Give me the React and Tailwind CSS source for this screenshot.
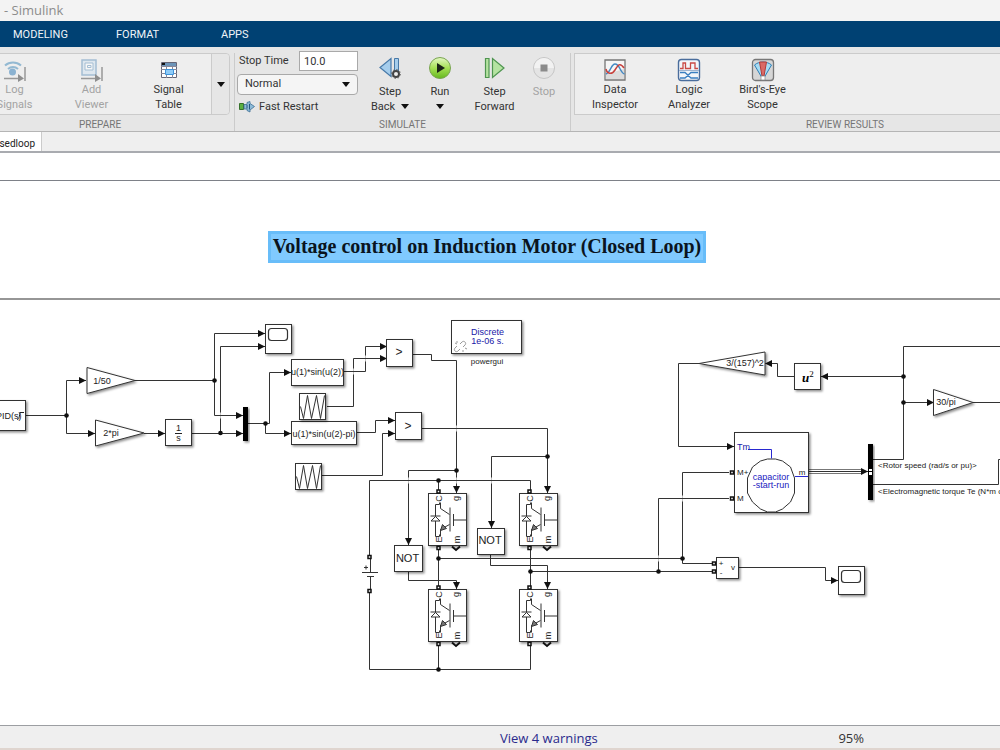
import React from 'react';
import clsx from 'clsx';

const Caret = ({ className }) => (
  <svg viewBox="0 0 8 5" className={clsx('h-[5px] w-2', className)} fill="#111">
    <path d="M0 0h8L4 5z" />
  </svg>
);

/* ---------- toolstrip icons ---------- */

const LogIcon = () => (
  <svg viewBox="0 0 24 24" className="size-6 opacity-50" fill="none">
    <path d="M2 7.500A12 12 0 0 1 18 7.500M5 11A7.500 7.500 0 0 1 15 11" stroke="#3b86b8" strokeWidth="2" />
    <circle cx="9.500" cy="14" r="3.500" fill="#2b78b5" />
    <path d="M1 20.500h16M22 9v14" stroke="#444" strokeWidth="1.500" />
    <path d="M15 16l6 4.500-6 3.500z" fill="#333" />
  </svg>
);

const ViewerIcon = () => (
  <svg viewBox="0 0 24 24" className="size-6 opacity-50" fill="none">
    <path d="M2 2h14v15H2z" fill="#cfe2f1" stroke="#5c8fbb" strokeWidth="1.500" />
    <path d="M5 5h8v7H5z" fill="#fff" stroke="#5c8fbb" />
    <path d="M7.500 7.500h3.500v2H7.500z" stroke="#5c8fbb" />
    <path d="M1 20.500h16M22 9v14" stroke="#444" strokeWidth="1.500" />
    <path d="M15 16l6 4.500-6 3.500z" fill="#333" />
  </svg>
);

const TableIcon = () => (
  <svg viewBox="0 0 24 24" className="size-6" fill="none">
    <path d="M4.500 4.500h15v15h-15z" fill="#fff" stroke="#667" />
    <path d="M5 5h14v3H5z" fill="#6d94b8" />
    <path d="M5 5h3v2H5z" fill="#111" />
    <path d="M4 8.500h16M4 11.500h16M4 15.500h16M9.500 8v12M15.500 8v12" stroke="#889" />
    <path d="M8.500 11.500h8v5h-8z" fill="#8ecbf7" stroke="#3d94dc" />
  </svg>
);

const StepBackIcon = () => (
  <svg viewBox="0 0 24 24" className="size-6" fill="none">
    <path d="M13 2.500v18L2 11.500z" fill="#a5cdec" stroke="#4779a8" strokeWidth="1.200" />
    <path d="M16.500 2.500h4v15h-4z" fill="#a5cdec" stroke="#4779a8" />
    <circle cx="18" cy="18" r="3" stroke="#444" strokeWidth="2" fill="#eee" />
    <circle cx="18" cy="18" r="4.500" stroke="#666" strokeDasharray="1.500 2" />
  </svg>
);

const RunIcon = () => (
  <svg viewBox="0 0 24 24" className="size-6">
    <defs>
      <linearGradient id="run" x1="0" y1="0" x2="0" y2="1">
        <stop offset="0" stopColor="#e4f8c4" />
        <stop offset=".5" stopColor="#a5e055" />
        <stop offset="1" stopColor="#64b81d" />
      </linearGradient>
    </defs>
    <circle cx="12" cy="12" r="10.500" fill="url(#run)" stroke="#7aa552" />
    <path d="M9 7l8 5-8 5z" fill="#1c2418" />
  </svg>
);

const StepForwardIcon = () => (
  <svg viewBox="0 0 24 24" className="size-6" fill="#b5e3a1" stroke="#4f9550" strokeWidth="1.200">
    <path d="M2.500 2.500H6v19H2.500zM9.500 2.500v19L21 12z" />
  </svg>
);

const StopIcon = () => (
  <svg viewBox="0 0 24 24" className="size-6">
    <circle cx="12" cy="12" r="10.500" fill="#e4e4e4" stroke="#c6c6c6" />
    <path d="M2 12a10 10 0 0 1 20 0z" fill="#f2f2f2" />
    <path d="M8.500 8.500h7v7h-7z" fill="#8b8b8b" />
  </svg>
);

const FastRestartIcon = () => (
  <svg viewBox="0 0 16 12" className="h-3 w-4">
    <path d="M.5 2.500h4v6h-4z" fill="#5bb040" stroke="#35702a" />
    <path d="M5 3.500h3v-2l3-1v2l4.500 3-4.500 3.500v2l-3-1.500V8H5z" fill="#8fbbd8" stroke="#3c6f96" strokeWidth=".8" />
    <path d="M10.500 3v5.500M8 4v3.500" stroke="#24557d" />
  </svg>
);

const InspectorIcon = () => (
  <svg viewBox="0 0 24 24" className="size-6" fill="none">
    <path d="M2 2h20v20H2z" fill="#f6f6f6" stroke="#777" strokeWidth="1.300" />
    <path d="M3 16l18-5v10H3z" fill="#dcdcdc" />
    <path d="M3 16C8 14 8 6 12 6c5 0 5 9 9.500 10" stroke="#4389c4" strokeWidth="1.500" />
    <path d="M3 11c1 5 6 6 9 1s5-8 9-2" stroke="#c7413c" strokeWidth="1.500" />
  </svg>
);

const AnalyzerIcon = () => (
  <svg viewBox="0 0 24 24" className="size-6" fill="none">
    <rect x="1.500" y="1.500" width="21" height="21" rx="3" fill="#f3f6fa" stroke="#4a6d9c" strokeWidth="1.400" />
    <path d="M3 10.500h3V5h2.500v5.500h5V5H18v5.500h3" stroke="#c94a45" strokeWidth="1.300" />
    <path d="M2 12.500h20" stroke="#9db4d0" />
    <path d="M3 14.500h5l6 5.500h7M3 20h5l6-5.500h7" stroke="#3a7fc1" strokeWidth="1.300" />
  </svg>
);

const BirdIcon = () => (
  <svg viewBox="0 0 24 24" className="size-6" fill="none">
    <rect x="1.500" y="1.500" width="21" height="21" rx="3" fill="#d6d6d6" stroke="#777" strokeWidth="1.300" />
    <path d="M10.500 19L3.500 7C8 3 16 3 20.500 7l-7 12z" fill="#a7dcf3" stroke="#2d7fb8" />
    <path d="M8.500 4h7l-2.500 14h-2z" fill="#db6a66" stroke="#b23a37" />
    <path d="M10 18h4v4h-4z" fill="#fff" stroke="#888" strokeWidth=".7" />
  </svg>
);

/* ---------- toolstrip ---------- */

const GalleryButton = ({ icon, lines, disabled, className }) => (
  <button
    type="button"
    disabled={disabled}
    className={clsx('flex shrink-0 flex-col items-center pt-1 text-center leading-[15px]', disabled ? 'text-[#a3a3a3]' : 'text-[#333]', className)}
  >
    {icon}
    <span>{lines[0]}<br />{lines[1]}</span>
  </button>
);

const StepButton = ({ icon, label, second, caret, disabled, className }) => (
  <button
    type="button"
    disabled={disabled}
    className={clsx('flex shrink-0 flex-col items-center leading-[15px]', disabled ? 'text-[#a3a3a3]' : 'text-[#333]', className)}
  >
    {icon}
    <span className="mt-1">{label}</span>
    <span className="flex h-[15px] items-center gap-[6px]">
      {second}
      {caret && <Caret />}
    </span>
  </button>
);

const Section = ({ title, className, children }) => (
  <section className={clsx('flex shrink-0 flex-col justify-between', className)}>
    {children}
    <h2 className="text-center text-[10px] leading-[12px] text-[#757575]">{title}</h2>
  </section>
);

const Toolstrip = () => (
  <div className="flex h-[85px] items-end overflow-hidden border-b border-[#b5b5b5] bg-[#e6e6e6] text-[11px]">
    <Section title="PREPARE" className="-ml-[34px] h-[78px] w-[268px]">
      <div className="mr-1 flex h-[62px] justify-end rounded-r border border-[#cbcbcb] bg-[#eeeeee]">
        <GalleryButton icon={<LogIcon />} lines={['Log', 'Signals']} disabled className="w-[77px]" />
        <GalleryButton icon={<ViewerIcon />} lines={['Add', 'Viewer']} disabled className="w-[77px]" />
        <GalleryButton icon={<TableIcon />} lines={['Signal', 'Table']} className="mr-1 w-[77px]" />
        <button type="button" aria-label="More prepare tools" className="flex w-[18px] shrink-0 items-center justify-center rounded-r border-l border-[#cbcbcb] bg-[#e6e6e6]">
          <Caret />
        </button>
      </div>
    </Section>
    <Section title="SIMULATE" className="h-[78px] w-[337px] border-x border-[#cbcbcb]">
      <div className="flex">
        <div className="-mt-[2px] ml-[2px] flex w-[121px] flex-col gap-[3px]">
          <div className="flex items-center justify-between">
            <label htmlFor="stop-time" className="pl-[2px] text-[#333]">Stop Time</label>
            <input id="stop-time" type="text" defaultValue="10.0" className="h-5 w-[59px] border border-[#a9a9a9] bg-white px-1 text-[#333]" />
          </div>
          <div className="relative">
            <select aria-label="Simulation mode" className="h-[21px] w-full appearance-none rounded border border-[#a9a9a9] bg-[#f5f5f5] pl-[7px] text-[#333]">
              <option>Normal</option>
            </select>
            <Caret className="pointer-events-none absolute top-2 right-2" />
          </div>
          <button type="button" className="flex items-center gap-1 pl-[2px] leading-[18px] text-[#333]">
            <FastRestartIcon />
            Fast Restart
          </button>
        </div>
        <div className="ml-[10px] flex pt-[3px]">
          <StepButton icon={<StepBackIcon />} label="Step" second="Back" caret className="w-11" />
          <StepButton icon={<RunIcon />} label="Run" caret className="w-14" />
          <StepButton icon={<StepForwardIcon />} label="Step" second="Forward" className="w-[53px]" />
          <StepButton icon={<StopIcon />} label="Stop" disabled className="w-[46px]" />
        </div>
      </div>
    </Section>
    <Section title="REVIEW RESULTS" className="h-[78px] w-[548px]">
      <div className="ml-[3px] flex h-[62px] border border-[#cbcbcb] bg-[#eeeeee] pl-[3px]">
        <GalleryButton icon={<InspectorIcon />} lines={['Data', 'Inspector']} className="w-[74px]" />
        <GalleryButton icon={<AnalyzerIcon />} lines={['Logic', 'Analyzer']} className="w-[74px]" />
        <GalleryButton icon={<BirdIcon />} lines={["Bird's-Eye", 'Scope']} className="w-[73px]" />
      </div>
    </Section>
  </div>
);

/* ---------- model blocks ---------- */

const Block = ({ x, y, w, h, children }) => (
  <g>
    <rect x={x} y={y} width={w} height={h} fill="#fff" stroke="#333" filter="url(#shadow)" />
    {children}
  </g>
);

const Label = ({ x, y, size = 9, anchor = 'middle', fill = '#222', children, ...rest }) => (
  <text x={x} y={y} fontSize={size} textAnchor={anchor} fill={fill} {...rest}>{children}</text>
);

const Gain = ({ points, x, y, label }) => (
  <g>
    <polygon points={points} fill="#fff" stroke="#333" filter="url(#shadow)" />
    <Label x={x} y={y}>{label}</Label>
  </g>
);

const ScopeBlock = ({ x, y, h }) => (
  <Block x={x} y={y} w={26} h={h}>
    <rect x={x + 3} y={y + 4} width="19" height="12" rx="3" fill="none" stroke="#333" strokeWidth="1.200" />
  </Block>
);

const Sequence = ({ x, y }) => (
  <Block x={x} y={y} w={26} h={26}>
    <path d={`M${x + 1} ${y + 13}l3 12l4-23l4 23l5-23l4 23l4-23`} fill="none" stroke="#333" />
  </Block>
);

const Port = ({ x, y }) => (
  <rect x={x - 1.5} y={y - 1.5} width="3" height="3" fill="#fff" stroke="#111" strokeWidth="1.500" />
);

const Igbt = ({ x, y }) => (
  <g>
    <Block x={x} y={y} w={38} h={52} />
    <g transform={`translate(${x} ${y})`} fill="none" stroke="#333">
      <path d="M11 9v2H7v32h4v-2M12 9v6l9 6M12 43v-7l9-5M21.500 14v24M25 20.500v12M25 26.500h13M2 22.500h10" />
      <path d="M2.500 27.500h9L7 23z" fill="#fff" />
      <path d="M12 37l2-6 4 4z" fill="#777" />
      <path d="M23.500 53l4 3.500 4-3.500" stroke="#111" strokeWidth="2" />
      <Label x={0} y={0} transform="translate(13 5) rotate(-90)" stroke="none">C</Label>
      <Label x={0} y={0} transform="translate(13 46) rotate(-90)" stroke="none">E</Label>
      <Label x={0} y={0} transform="translate(30 5) rotate(-90)" stroke="none">g</Label>
      <Label x={0} y={0} transform="translate(31 46) rotate(-90)" stroke="none">m</Label>
    </g>
    <Port x={x + 10} y={y - 2} />
    <Port x={x + 10} y={y + 54.5} />
  </g>
);

// wires that end in an arrow
const signals = [
  'M66.500 415.500V380.500H86',
  'M66.500 415.500V433.500H95',
  'M144 433.500H165',
  'M214.500 381V333.500H265',
  'M214.500 381V415.500H243',
  'M220.500 433V346.500H265',
  'M192 433.500H243',
  'M248 423.500H269.500V372.500H291',
  'M265.500 424V433.500H291',
  'M344 371.500H365.500V346.500H387',
  'M327 406.500H353.500V358.500H387',
  'M357 432.500H375.500V420.500H395',
  'M322 475.500H382.500V433.500H395',
  'M413 354.500H431.500V360.500H456.500V493',
  'M456 470.500H408.500V545',
  'M422 428.500H547.500V493',
  'M547 456.500H491.500V528',
  'M408.500 572V580.500H456.500V589',
  'M490.500 555V565.500H547.500V589',
  'M699 363.500H678.500V446.500H734',
  'M794 376.500H777.500V363.500H765',
  'M903 376.500H821',
  'M903 402.500H934',
  'M739 567.500H825.500V580.500H838',
];

const lines = [
  'M26 415.500H66',
  'M135 380.500H214',
  'M369.500 557V480.500H530.500V491',
  'M438.500 480V491',
  'M438.500 549V586',
  'M438.500 558.500H682.500V563.500H713',
  'M682.500 559V472.500H729',
  'M530.500 549V586',
  'M530.500 571.500H713',
  'M658.500 571V498.500H729',
  'M369.500 592V669.500H530.500V644',
  'M438.500 644V669',
  'M873 459.500H903.500V346.500H1000',
  'M873 484.500H998.500V459.500H1000',
  'M973 402.500H1000',
];

// places where one wire passes over another
const crossings = [
  [220.5, 415.5], [365.5, 358.5], [353.5, 371.5], [456.5, 428.5],
  [456.5, 480.5], [408.5, 480.5], [491.5, 480.5], [658.5, 558.5], [682.5, 498.5],
];

const junctions = [
  [66.5, 415.5], [214.5, 380.5], [220.5, 433], [265.5, 423.5], [456.5, 470.5],
  [438.5, 480.5], [547.5, 456.5], [438.5, 558.5], [530.5, 571.5], [658.5, 571.5],
  [682.5, 558.5], [438.5, 669.5], [903.5, 376.5], [903.5, 402.5],
];

const ports = [[369.5, 557], [369.5, 591], [732, 472.5], [732, 498.5], [714, 563.5], [714, 571.5]];

const Model = () => (
  <svg viewBox="0 300 1000 425" className="h-[425px] w-[1000px] shrink-0" fontFamily="'Liberation Sans', Arial, sans-serif">
    <defs>
      <filter id="shadow" x="-20%" y="-20%" width="150%" height="150%">
        <feDropShadow dx="1.500" dy="1.500" stdDeviation="1" floodColor="#000" floodOpacity=".45" />
      </filter>
      <marker id="arrow" viewBox="0 0 7 7" refX="7" refY="3.500" markerWidth="7" markerHeight="7" markerUnits="userSpaceOnUse" orient="auto">
        <path d="M0 0l7 3.500L0 7z" fill="#111" />
      </marker>
    </defs>

    <g fill="none" stroke="#333">
      {signals.map((d) => <path key={d} d={d} markerEnd="url(#arrow)" />)}
      {lines.map((d) => <path key={d} d={d} />)}
      {crossings.map(([x, y]) => (
        <g key={`${x}-${y}`}>
          <path d={`M${x} ${y - 3}v6`} stroke="#fff" strokeOpacity=".7" strokeWidth="2" />
          <path d={`M${x - 3} ${y}h6`} />
        </g>
      ))}
      <path d="M808 469.500H862M808 471.500H862M808 473.500H862" stroke="#777" />
      <path d="M808 471.500H868" markerEnd="url(#arrow)" />
    </g>
    {junctions.map(([x, y]) => <circle key={`${x}-${y}`} cx={x} cy={y} r="2.300" fill="#111" />)}

    <Block x={-20.5} y={400.5} w={46} h={30}>
      <Label x={-4} y={419} anchor="start">PID(s)</Label>
      <path d="M17 419.500c2 0 2-1 3-7h4" fill="none" stroke="#222" />
    </Block>
    <Gain points="87,367.500 87,393.500 135,380.500" x={102} y={384} label="1/50" />
    <Gain points="95.500,420 95.500,446 144,433" x={111} y={436} label="2*pi" />
    <Block x={165.5} y={419.5} w={26} h={26}>
      <Label x={178.5} y={431}>1</Label>
      <path d="M175 433.500h7" stroke="#222" />
      <Label x={178.5} y={441}>s</Label>
    </Block>
    <rect x="243" y="407" width="5" height="34" fill="#000" filter="url(#shadow)" />
    <ScopeBlock x={265.5} y={324.5} h={29} />
    <Block x={291.5} y={359.5} w={52} h={26}>
      <Label x={317.5} y={375}>u(1)*sin(u(2))</Label>
    </Block>
    <Block x={291.5} y={421.5} w={65} h={23}>
      <Label x={324} y={437}>u(1)*sin(u(2)-pi)</Label>
    </Block>
    <Sequence x={299.5} y={393.5} />
    <Sequence x={295.5} y={463.5} />
    <Block x={386.5} y={339.5} w={26} h={27}>
      <Label x={399} y={356} size={12}>&gt;</Label>
    </Block>
    <Block x={395.5} y={412.5} w={26} h={27}>
      <Label x={408} y={430} size={12}>&gt;</Label>
    </Block>

    <Block x={451.5} y={320.5} w={70} h={33}>
      <Label x={487.5} y={335} fill="#2020a8">Discrete</Label>
      <Label x={487.5} y={344} fill="#2020a8">1e-06 s.</Label>
      <g fill="none" stroke="#999">
        <path d="M457 346l-2 2c-2 2 1 5 3 3l2-2M460 344l2-2c2-2 5 1 3 3l-2 2M455 343l2 1M457 341v2M463 350v2M465 348l2 1" />
      </g>
    </Block>
    <Label x={487} y={364} size={8}>powergui</Label>

    <Block x={394.5} y={545.5} w={28} h={26}>
      <Label x={407.5} y={562} size={11}>NOT</Label>
    </Block>
    <Block x={477.5} y={528.5} w={27} h={26}>
      <Label x={490} y={544} size={11}>NOT</Label>
    </Block>
    <Igbt x={428.5} y={493.5} />
    <Igbt x={519.5} y={493.5} />
    <Igbt x={428.5} y={589.5} />
    <Igbt x={519.5} y={589.5} />

    <path d="M370.500 558v14M362 572.500h16M367 576.500h7M370.500 577v13M364 567.500h4M366 565.500v4" stroke="#333" />

    <Gain points="699,363.500 765,352 765,375" x={745} y={366} label="3/(157)^2" />
    <Block x={794.5} y={363.5} w={26} h={26}>
      <text x="802" y="382" fontSize="13" fontWeight="bold" fontStyle="italic" fontFamily="'Liberation Serif', serif">
        u<tspan dy="-5" fontSize="9" fontStyle="normal" fontWeight="normal">2</tspan>
      </text>
    </Block>
    <Gain points="933.500,389.500 933.500,415.500 973,402.500" x={946} y={405} label="30/pi" />

    <Block x={734.5} y={432.5} w={74} h={80}>
      <path d="M747.500 478l5-11 8-6 7-2h8l7 2 8 6 4 11v15l-4 9-8 7-7 3h-8l-7-3-8-7-5-9z" fill="none" stroke="#333" />
      <path d="M748 449.500h23.500v9M795 476.500h13" fill="none" stroke="#2828d0" />
      <Label x={737} y={450} anchor="start" fill="#2020a8">Tm</Label>
      <Label x={737} y={475} anchor="start" size={8}>M+</Label>
      <Label x={737} y={501} anchor="start" size={8}>M</Label>
      <Label x={802} y={475} size={8}>m</Label>
      <Label x={771} y={480} fill="#2020c0">capacitor</Label>
      <Label x={771} y={488} fill="#2020c0">-start-run</Label>
    </Block>

    <rect x="868" y="444" width="5" height="56" fill="#000" filter="url(#shadow)" />
    <path d="M869 469h3v2h-3zM869 472h3v3h-3z" fill="#fff" />
    <Label x={878} y={468} anchor="start" size={8}>&lt;Rotor speed (rad/s or pu)&gt;</Label>
    <Label x={878} y={494} anchor="start" size={8}>&lt;Electromagnetic torque Te (N*m or pu)&gt;</Label>

    <Block x={716.5} y={557.5} w={22} h={21}>
      <Label x={721} y={566} size={8}>+</Label>
      <Label x={721} y={575} size={8}>-</Label>
      <Label x={733} y={570} size={8}>v</Label>
    </Block>
    <ScopeBlock x={838.5} y={566.5} h={28} />
    {ports.map(([x, y]) => <Port key={`${x}-${y}`} x={x} y={y} />)}
  </svg>
);

export default function App() {
  return (
    <div className="flex min-h-screen flex-col overflow-hidden bg-white font-['Roboto','Noto_Sans',sans-serif]">
      <header className="h-[21px] bg-[#f3f3f3] pl-1 font-['Open_Sans',sans-serif] text-[13px] leading-[21px] text-[#8c8c8c]">- Simulink</header>

      <nav className="flex h-[26px] items-center bg-[#004173] pt-[2px] text-[11px] text-[#f0f4f8]">
        <button type="button" className="ml-[13px] w-[103px] text-left">MODELING</button>
        <button type="button" className="w-[105px] text-left">FORMAT</button>
        <button type="button">APPS</button>
      </nav>

      <Toolstrip />

      <div className="flex h-[21px] border-b-2 border-[#a9abb0] bg-[#efefef]">
        <button type="button" className="-ml-8 w-[74px] border-r border-[#cbcbcb] bg-white pt-1 pr-[6px] text-right text-[10px] text-[#222]">osedloop</button>
      </div>
      <div className="h-7 border-b border-[#7e8188] bg-white" />

      <main className="flex flex-1 flex-col">
        <div className="flex h-[119px] justify-center border-b-2 border-[#969696] pt-[50px] pr-[26px]">
          <h1 className="h-8 border-[3px] border-[#68bdf9] bg-[#80caff] px-[2px] font-['Palatino_Linotype','Liberation_Serif',serif] text-[20px] leading-[25px] font-bold whitespace-nowrap text-[#0a1420]">
            Voltage control on Induction Motor (Closed Loop)
          </h1>
        </div>
        <div className="flex overflow-hidden">
          <Model />
        </div>
      </main>

      <footer className="flex h-[25px] items-center border-t border-b-2 border-t-[#9c9ea2] border-b-[#dfd5cf] bg-[#efefef] pt-1 font-['Open_Sans',sans-serif] text-[13px]">
        <a href="#warnings" className="ml-[50%] text-[#2a2a8c]">View 4 warnings</a>
        <span className="mr-[136px] ml-auto text-[#333]">95%</span>
      </footer>
    </div>
  );
}
